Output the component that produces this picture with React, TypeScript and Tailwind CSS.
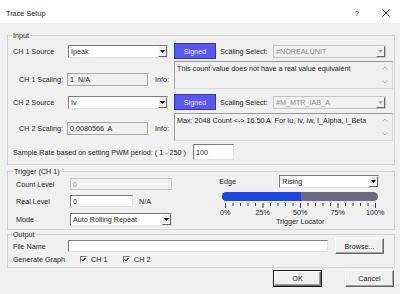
import React from "react";

const sunken =
  "border border-t-[#7a7a7a] border-l-[#7a7a7a] border-b-[#e3e3e3] border-r-[#e3e3e3]";

function Arrow({ disabled }: { disabled?: boolean }) {
  return (
    <div className="flex h-full w-[9px] items-center justify-center border border-t-[#fafafa] border-l-[#fafafa] border-b-[#696969] border-r-[#696969] bg-[#f0f0f0]">
      <svg width="5" height="3" viewBox="0 0 5 3">
        <path d="M0 0H5L2.5 3Z" fill={disabled ? "#a8a8a8" : "#000"} />
      </svg>
    </div>
  );
}

function Combo({
  className,
  value,
  disabled,
}: {
  className: string;
  value: string;
  disabled?: boolean;
}) {
  return (
    <div
      className={`flex h-[13px] items-stretch ${
        disabled
          ? "border border-[#c4c4c4] bg-[#f0f0f0] text-[#8a8a8a]"
          : `${sunken} bg-white text-[#1e1e1e]`
      } ${className}`}
    >
      <div className="flex flex-1 items-center overflow-hidden whitespace-pre pl-[2px]">
        {value}
      </div>
      <Arrow disabled={disabled} />
    </div>
  );
}

function Edit({
  className,
  value,
  variant,
}: {
  className: string;
  value: string;
  variant: "white" | "readonly" | "disabled";
}) {
  const v =
    variant === "white"
      ? `${sunken} bg-white text-[#1e1e1e]`
      : variant === "readonly"
      ? "border border-[#a8a8a8] bg-[#f0f0f0] text-[#1e1e1e]"
      : "border border-[#c4c4c4] bg-[#f0f0f0] text-[#9a9a9a]";
  return (
    <div
      className={`flex items-center overflow-hidden whitespace-pre pl-[2px] ${v} ${className}`}
    >
      {value}
    </div>
  );
}

function InfoBox({ className, text }: { className: string; text: string }) {
  return (
    <div
      className={`flex w-[219px] border border-t-[#9a9a9a] border-l-[#9a9a9a] border-b-[#d8d8d8] border-r-[#d8d8d8] bg-[#f0f0f0] ${className}`}
    >
      <div className="flex-1 whitespace-pre pl-[2px] pt-[2px]">{text}</div>
      <div className="flex w-[14px] flex-col items-center justify-between py-[4px]">
        <svg width="6" height="4" viewBox="0 0 6 4">
          <path d="M0.5 3.5L3 1L5.5 3.5" fill="none" stroke="#b8b8b8" strokeWidth="1" />
        </svg>
        <svg width="6" height="4" viewBox="0 0 6 4">
          <path d="M0.5 0.5L3 3L5.5 0.5" fill="none" stroke="#b8b8b8" strokeWidth="1" />
        </svg>
      </div>
    </div>
  );
}

function Button({ className, label, def }: { className: string; label: string; def?: boolean }) {
  return (
    <div className={`${def ? "border border-[#1a1a1a]" : ""} ${className}`}>
      <div className="flex h-full w-full items-center justify-center border border-t-white border-l-white border-b-[#696969] border-r-[#696969] bg-[#f0f0f0] shadow-[inset_-1px_-1px_0_#a0a0a0]">
        {label}
      </div>
    </div>
  );
}

function Check({ label }: { label: string }) {
  return (
    <div className="flex items-center">
      <div className={`flex h-[7px] w-[7px] items-center justify-center bg-white ${sunken}`}>
        <svg width="5" height="5" viewBox="0 0 5 5">
          <path d="M0.5 2.3L2 3.8L4.6 0.8" fill="none" stroke="#000" strokeWidth="1.1" />
        </svg>
      </div>
      <span className="ml-[4px]">{label}</span>
    </div>
  );
}

export default function App() {
  const ticks = Array.from({ length: 21 }, (_, i) => i);
  return (
    <div className="h-[294px] w-[400px] overflow-hidden bg-[#f0f0f0] font-['Liberation_Sans',Arial,sans-serif] text-[7.2px] leading-[9px] text-[#1e1e1e]">
      {/* Title bar */}
      <div className="flex h-[23px] items-center bg-white pl-[6px] pt-[3px]">
        <span className="flex-1 text-[7.3px]">Trace Setup</span>
        <span className="mr-[23px] text-[7.5px]">?</span>
        <svg className="mr-[10px]" width="8" height="8" viewBox="0 0 8 8">
          <path d="M0.5 0.5L7.5 7.5M7.5 0.5L0.5 7.5" stroke="#111" strokeWidth="0.9" />
        </svg>
      </div>

      <div className="pl-[7px] pr-[5px] pt-[8px]">
        {/* Input */}
        <fieldset className="h-[134px] min-w-0 border border-[#d3d3d3] pl-[5px] pt-[3px]">
          <legend className="ml-[-1px] px-[1px]">Input</legend>

          <div className="flex h-[16px] items-center">
            <div className="w-[55px]">CH 1 Source</div>
            <Combo className="w-[100px]" value="Ipeak" />
            <div className="ml-[6px] flex h-[16px] w-[42px] items-center justify-center border border-[#3434c4] bg-[#5858ee] text-[#e8e8ff]">
              Signed
            </div>
            <div className="ml-[4px] w-[53px]">Scaling Select:</div>
            <Combo className="w-[113px]" value="#NOREALUNIT" disabled />
          </div>

          <div className="mt-[1px] flex h-[30px]">
            <div className="mt-[13px] flex h-[13px] w-[54px] items-center pl-[6px]">CH 1 Scaling:</div>
            <Edit className="mt-[13px] h-[13px] w-[81px]" value="1  N/A" variant="readonly" />
            <div className="ml-[7px] mt-[13px] flex h-[13px] w-[19px] items-center">Info:</div>
            <InfoBox className="mt-[1px] h-[28px]" text="This count value does not have a real value equivalent" />
          </div>

          <div className="mt-[4px] flex h-[16px] items-center">
            <div className="w-[55px]">CH 2 Source</div>
            <Combo className="w-[100px]" value="Iv" />
            <div className="ml-[6px] flex h-[16px] w-[42px] items-center justify-center border border-[#3434c4] bg-[#5858ee] text-[#e8e8ff]">
              Signed
            </div>
            <div className="ml-[4px] w-[53px]">Scaling Select:</div>
            <Combo className="w-[113px]" value="#M_MTR_IAB_A" disabled />
          </div>

          <div className="mt-[2px] flex h-[29px]">
            <div className="mt-[10px] flex h-[13px] w-[54px] items-center pl-[6px]">CH 2 Scaling:</div>
            <Edit className="mt-[10px] h-[13px] w-[81px]" value="0.0080566  A" variant="readonly" />
            <div className="ml-[7px] mt-[10px] flex h-[13px] w-[19px] items-center">Info:</div>
            <InfoBox
              className="mt-[1px] h-[28px]"
              text="Max: 2048 Count <-> 16.50 A  For Iu, Iv, Iw, I_Alpha, I_Beta"
            />
          </div>

          <div className="mt-[3px] flex h-[16px] items-center">
            <div className="w-[180px] whitespace-nowrap">
              Sample Rate based on setting PWM period: ( 1 - 250 )
            </div>
            <Edit className="h-[16px] w-[41px]" value="100" variant="white" />
          </div>
        </fieldset>

        {/* Trigger */}
        <fieldset className="mt-[2px] h-[63px] min-w-0 border border-[#d3d3d3] pl-[8px]">
          <legend className="ml-[-3px] px-[1px]">Trigger (CH 1)</legend>
          <div className="flex">
            <div className="w-[205px]">
              <div className="mt-[2px] flex h-[12px] items-center">
                <div className="w-[54px]">Count Level</div>
                <Edit className="h-[12px] w-[102px]" value="0" variant="disabled" />
              </div>
              <div className="mt-[5px] flex h-[12px] items-center">
                <div className="w-[54px]">Real Level</div>
                <Edit className="h-[12px] w-[63px]" value="0" variant="white" />
                <div className="ml-[6px]">N/A</div>
              </div>
              <div className="mt-[6px] flex h-[13px] items-center">
                <div className="w-[54px]">Mode</div>
                <Combo className="w-[102px]" value="Auto Rolling Repeat" />
              </div>
            </div>
            <div className="flex-1">
              <div className="mt-[-1px] flex h-[13px] items-center">
                <div className="w-[60px]">Edge</div>
                <Combo className="w-[100px]" value="Rising" />
              </div>
              <div className="ml-[3px] mt-[4px] flex h-[9px] w-[156px] overflow-hidden rounded-full bg-[#6a6a82]">
                <div className="h-full w-[79px] bg-[#1f48e2]" />
              </div>
              <svg className="ml-[3px] mt-[2px] block" width="156" height="5" viewBox="0 0 156 5">
                {ticks.map((i) => (
                  <line
                    key={i}
                    x1={3.5 + i * 7.5}
                    x2={3.5 + i * 7.5}
                    y1={0}
                    y2={i % 5 === 0 ? 5 : 3}
                    stroke="#333"
                    strokeWidth="1"
                  />
                ))}
              </svg>
              <div className="ml-[-12.75px] grid w-[187.5px] grid-cols-5 text-center">
                <span>0%</span>
                <span>25%</span>
                <span>50%</span>
                <span>75%</span>
                <span>100%</span>
              </div>
              <div className="ml-[-12.75px] w-[187.5px] text-center">Trigger Locator</div>
            </div>
          </div>
        </fieldset>

        {/* Output */}
        <fieldset className="h-[38px] min-w-0 border border-[#d3d3d3] pl-[5px]">
          <legend className="ml-[-1px] px-[1px]">Output</legend>
          <div className="mt-[-1px] flex h-[16px] items-center">
            <div className="w-[55px]">File Name</div>
            <Edit className="h-[12px] w-[260px]" value="" variant="white" />
            <Button className="ml-[7px] h-[16px] w-[49px]" label="Browse..." />
          </div>
          <div className="mt-[1px] flex h-[9px] items-center">
            <div className="w-[67px]">Generate Graph</div>
            <div className="w-[43px]">
              <Check label="CH 1" />
            </div>
            <Check label="CH 2" />
          </div>
        </fieldset>

        <div className="mr-[1px] mt-[2px] flex justify-end gap-[23px]">
          <Button className="h-[17px] w-[49px]" label="OK" def />
          <Button className="h-[17px] w-[49px]" label="Cancel" />
        </div>
      </div>
    </div>
  );
}
